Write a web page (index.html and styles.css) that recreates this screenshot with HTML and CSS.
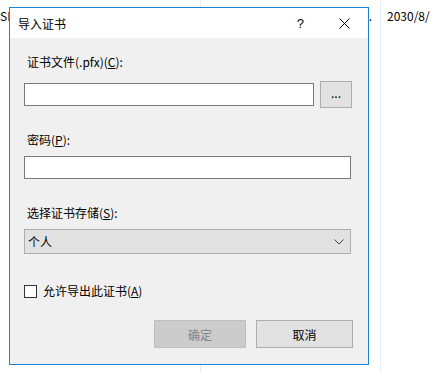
FILE: index.html
```html
<!DOCTYPE html>
<html lang="zh-CN">

<head>
    <meta charset="UTF-8" />
    <title>导入证书</title>
    <link rel="stylesheet" href="styles.css">
</head>

<body>
    <div class="desktop">
        <div class="col col-name"><span class="cell">SH</span></div>
        <div class="col col-mid"><span class="cell dot">.</span></div>
        <div class="col col-date"><span class="cell">2030/8/</span></div>
    </div>

    <div class="dialog">
        <div class="titlebar">
            <span class="title">导入证书</span>
            <span class="help">?</span>
            <svg class="close" width="11" height="11" viewBox="0 0 11 11">
                <path d="M0.5 0.5 L10.5 10.5 M10.5 0.5 L0.5 10.5" stroke="#000" stroke-width="1" fill="none" />
            </svg>
        </div>

        <div class="content">
            <div class="label first">证书文件(.pfx)(<u>C</u>):</div>
            <div class="file-row">
                <div class="textbox file"></div>
                <button class="browse">...</button>
            </div>

            <div class="label pw">密码(<u>P</u>):</div>
            <div class="textbox wide"></div>

            <div class="label store">选择证书存储(<u>S</u>):</div>
            <div class="combo">
                <span>个人</span>
                <svg width="10" height="6" viewBox="0 0 10 6">
                    <path d="M0.5 0.5 L5 5 L9.5 0.5" stroke="#444" stroke-width="1" fill="none" />
                </svg>
            </div>

            <label class="check-row">
                <span class="checkbox"></span>
                <span>允许导出此证书(<u>A</u>)</span>
            </label>

            <div class="buttons">
                <button class="btn disabled">确定</button>
                <button class="btn">取消</button>
            </div>
        </div>
    </div>
</body>

</html>
```

FILE: styles.css
```css
body {
    margin: 0;
    width: 432px;
    height: 373px;
    overflow: hidden;
    background: #ffffff;
    font-family: "Noto Sans CJK SC", "Noto Sans", sans-serif;
    font-size: 12px;
    color: #000000;
    position: relative;
}

.desktop {
    display: flex;
    height: 373px;
}

.col {
    padding-top: 8px;
    line-height: 16px;
    box-sizing: border-box;
}

.col-name {
    width: 201px;
    border-right: 1px solid #e8eef8;
}

.col-mid {
    width: 180px;
    border-right: 1px solid #e8eef8;
    text-align: right;
    padding-right: 8px;
}

.col-date {
    padding-left: 6px;
}

.dialog {
    position: absolute;
    left: 9px;
    top: 7px;
    width: 360px;
    height: 358px;
    box-sizing: border-box;
    border: 1px solid #1883d7;
    background: #f0f0f0;
}

.titlebar {
    height: 30px;
    background: #ffffff;
    display: flex;
    align-items: center;
    padding-left: 8px;
}

.title {
    flex: 1;
    font-size: 12px;
}

.help {
    font-family: "Liberation Sans", sans-serif;
    font-size: 13px;
    margin-right: 35px;
}

.close {
    margin-right: 18px;
}

.content {
    padding: 16px 0 0 14px;
    line-height: 16px;
}

.label {
    padding-left: 3px;
    height: 16px;
}

.file-row {
    display: flex;
    align-items: center;
    margin-top: 11px;
}

.textbox {
    height: 23px;
    box-sizing: border-box;
    border: 1px solid #7a7a7a;
    background: #ffffff;
}

.textbox.file {
    width: 290px;
}

.textbox.wide {
    width: 327px;
    margin-top: 8px;
}

.browse {
    width: 32px;
    height: 27px;
    margin-left: 6px;
    border: 1px solid #adadad;
    background: #e1e1e1;
    font-family: inherit;
    font-size: 12px;
    padding: 0 0 4px 0;
}

.label.pw {
    margin-top: 24px;
}

.label.store {
    margin-top: 26px;
}

.combo {
    width: 327px;
    height: 25px;
    box-sizing: border-box;
    margin-top: 8px;
    border: 1px solid #adadad;
    background: #e1e1e1;
    display: flex;
    align-items: center;
    justify-content: space-between;
    padding: 0 6px 0 3px;
}

.check-row {
    display: flex;
    align-items: center;
    margin-top: 29px;
    height: 16px;
}

.checkbox {
    width: 13px;
    height: 13px;
    box-sizing: border-box;
    border: 1px solid #333333;
    background: #ffffff;
    margin-right: 6px;
}

.buttons {
    display: flex;
    justify-content: flex-end;
    gap: 10px;
    margin-top: 21px;
    padding-right: 15px;
}

.btn {
    height: 28px;
    border: 1px solid #adadad;
    background: #e1e1e1;
    font-family: inherit;
    font-size: 12px;
    color: #000000;
    padding: 0;
}

.btn.disabled {
    width: 92px;
    background: #cccccc;
    border-color: #bfbfbf;
    color: #838383;
}

.btn:last-child {
    width: 97px;
}
```
